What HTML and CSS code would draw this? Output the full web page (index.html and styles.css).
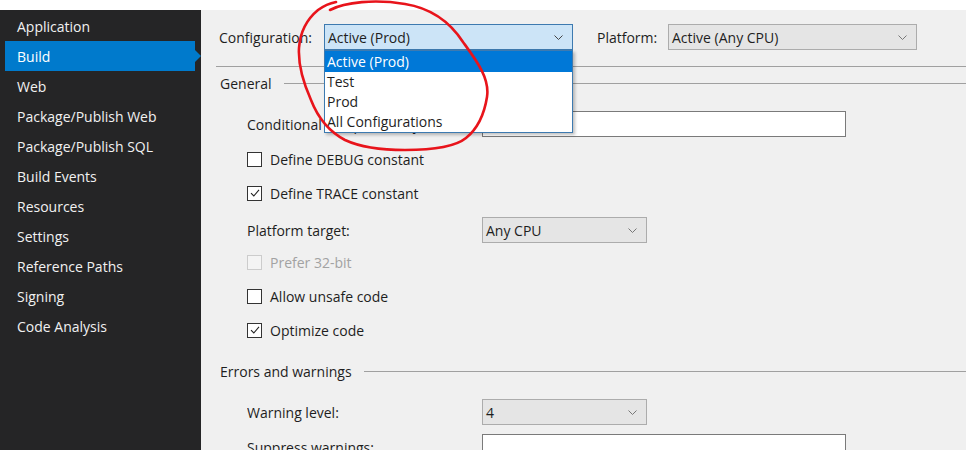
FILE: index.html
```html
<!DOCTYPE html>
<html>
<head>
<meta charset="utf-8">
<link rel="stylesheet" href="styles.css">
</head>
<body>
<div class="topstrip"></div>
<div class="window">
  <nav class="sidebar">
    <div class="nav-item">Application</div>
    <div class="nav-item active">Build</div>
    <div class="nav-item">Web</div>
    <div class="nav-item">Package/Publish Web</div>
    <div class="nav-item">Package/Publish SQL</div>
    <div class="nav-item">Build Events</div>
    <div class="nav-item">Resources</div>
    <div class="nav-item">Settings</div>
    <div class="nav-item">Reference Paths</div>
    <div class="nav-item">Signing</div>
    <div class="nav-item">Code Analysis</div>
  </nav>
  <main class="panel">
    <div class="toolbar">
      <span class="tb-label">Configuration:</span>
      <div class="combo combo-focus combo-config">
        <span>Active (Prod)</span>
        <svg class="chev" width="9" height="5" viewBox="0 0 9 5"><path d="M0.5 0.5 L4.5 4.5 L8.5 0.5" fill="none" stroke="#444" stroke-width="1"/></svg>
        <div class="droplist">
          <div class="drop-item selected">Active (Prod)</div>
          <div class="drop-item">Test</div>
          <div class="drop-item">Prod</div>
          <div class="drop-item">All Configurations</div>
        </div>
      </div>
      <span class="tb-label tb-label2">Platform:</span>
      <div class="combo combo-platform">
        <span>Active (Any CPU)</span>
        <svg class="chev" width="9" height="5" viewBox="0 0 9 5"><path d="M0.5 0.5 L4.5 4.5 L8.5 0.5" fill="none" stroke="#777" stroke-width="1"/></svg>
      </div>
    </div>
    <div class="separator"></div>

    <div class="group-head g-general"><span>General</span><div class="rule"></div></div>

    <div class="row r-cond">
      <span class="label">Conditional compilation symbols:</span>
      <div class="textbox tb-wide"></div>
    </div>
    <div class="row r-debug">
      <span class="check"></span><span class="check-text">Define DEBUG constant</span>
    </div>
    <div class="row r-trace">
      <span class="check"><svg width="12" height="12" viewBox="0 0 12 12"><path d="M2 6.2 L4.8 9 L10 2.8" fill="none" stroke="#222" stroke-width="1.1"/></svg></span><span class="check-text">Define TRACE constant</span>
    </div>
    <div class="row r-target">
      <span class="label">Platform target:</span>
      <div class="combo combo-small">
        <span>Any CPU</span>
        <svg class="chev" width="9" height="5" viewBox="0 0 9 5"><path d="M0.5 0.5 L4.5 4.5 L8.5 0.5" fill="none" stroke="#777" stroke-width="1"/></svg>
      </div>
    </div>
    <div class="row r-prefer disabled">
      <span class="check"></span><span class="check-text">Prefer 32-bit</span>
    </div>
    <div class="row r-unsafe">
      <span class="check"></span><span class="check-text">Allow unsafe code</span>
    </div>
    <div class="row r-opt">
      <span class="check"><svg width="12" height="12" viewBox="0 0 12 12"><path d="M2 6.2 L4.8 9 L10 2.8" fill="none" stroke="#222" stroke-width="1.1"/></svg></span><span class="check-text">Optimize code</span>
    </div>

    <div class="group-head g-errors"><span>Errors and warnings</span><div class="rule"></div></div>

    <div class="row r-warn">
      <span class="label">Warning level:</span>
      <div class="combo combo-small">
        <span>4</span>
        <svg class="chev" width="9" height="5" viewBox="0 0 9 5"><path d="M0.5 0.5 L4.5 4.5 L8.5 0.5" fill="none" stroke="#777" stroke-width="1"/></svg>
      </div>
    </div>
    <div class="row r-suppress">
      <span class="label">Suppress warnings:</span>
      <div class="textbox tb-wide"></div>
    </div>

    <svg class="annotation" width="220" height="170" viewBox="290 0 220 170">
      <path d="M330 10 C 345 2, 375 -1, 405 4 C 430 8, 450 22, 463 42 C 476 60, 490 78, 487 97 C 484 116, 476 130, 466 138 C 455 147, 430 150, 405 150 C 380 150, 360 147, 345 140 C 328 131, 318 118, 311 100 C 303 82, 298 65, 299 48 C 300 33, 306 20, 318 10 C 325 5, 331 3, 336 2" fill="none" stroke="#e8141b" stroke-width="2.6" stroke-linecap="round"/>
    </svg>
  </main>
</div>
</body>
</html>
```

FILE: styles.css
```css
html, body {
  margin: 0;
  padding: 0;
  background: #ffffff;
  width: 966px;
  height: 450px;
  overflow: hidden;
  font-family: "Open Sans", "Noto Sans", "Liberation Sans", sans-serif;
  font-size: 14px;
  color: #1e1e1e;
}

.topstrip {
  height: 10px;
  background: #ffffff;
}

.window {
  display: flex;
  height: 440px;
}

.sidebar {
  width: 201px;
  flex: none;
  background: #252526;
  padding-top: 1px;
  box-sizing: border-box;
}

.nav-item {
  position: relative;
  height: 30px;
  line-height: 32px;
  margin: 0 6px 0 5px;
  padding-left: 12px;
  color: #f1f1f1;
  white-space: nowrap;
}

.nav-item.active {
  background: #007acc;
  color: #ffffff;
}

.nav-item.active::after {
  content: "";
  position: absolute;
  right: -6px;
  top: 9px;
  border-top: 6px solid transparent;
  border-bottom: 6px solid transparent;
  border-left: 6px solid #007acc;
}

.panel {
  position: relative;
  flex: 1;
  background: #f0f0f0;
  padding-left: 15px;
  display: flex;
  flex-direction: column;
}

.panel > * {
  flex-shrink: 0;
}

.toolbar {
  display: flex;
  align-items: center;
  height: 26px;
  margin-top: 14px;
  padding-left: 3px;
}

.tb-label {
  width: 105px;
  flex: none;
}

.tb-label2 {
  width: 71px;
  margin-left: 24px;
}

.combo {
  position: relative;
  box-sizing: border-box;
  height: 26px;
  border: 1px solid #acacac;
  background: #e5e5e5;
  display: flex;
  align-items: center;
  padding-left: 3px;
  flex: none;
}

.combo .chev {
  position: absolute;
  right: 9px;
  top: 10px;
}

.combo-config {
  width: 249px;
}

.combo-focus {
  background: #cce4f7;
  border-color: #3d7ab0;
}

.combo-platform {
  width: 249px;
}

.combo-small {
  width: 165px;
}

.droplist {
  position: absolute;
  left: -1px;
  top: 25px;
  width: 249px;
  height: 83px;
  box-sizing: border-box;
  background: #ffffff;
  border: 1px solid #3d7ab0;
  box-shadow: 2px 2px 3px rgba(0, 0, 0, 0.25);
  z-index: 2;
}

.drop-item {
  height: 20px;
  line-height: 20px;
  padding-left: 2px;
  white-space: nowrap;
}

.drop-item.selected {
  background: #0078d7;
  color: #ffffff;
  height: 21px;
  line-height: 21px;
}

.separator {
  height: 1px;
  background: #a0a0a0;
  margin-top: 16px;
}

.group-head {
  display: flex;
  align-items: center;
  height: 20px;
  padding-left: 4px;
}

.group-head .rule {
  flex: 1;
  height: 1px;
  background: #a0a0a0;
  margin-left: 12px;
}

.g-general {
  margin-top: 6px;
}

.g-errors {
  margin-top: 18px;
}

.row {
  display: flex;
  align-items: center;
  height: 26px;
  padding-left: 31px;
}

.label {
  width: 235px;
  flex: none;
  white-space: nowrap;
  overflow: hidden;
}

.textbox {
  box-sizing: border-box;
  height: 26px;
  background: #ffffff;
  border: 1px solid #7a7a7a;
  flex: none;
}

.tb-wide {
  width: 364px;
}

.check {
  width: 15px;
  height: 15px;
  box-sizing: border-box;
  border: 1px solid #333333;
  background: #ffffff;
  display: flex;
  align-items: center;
  justify-content: center;
  margin-right: 8px;
  flex: none;
}

.disabled .check {
  border-color: #cccccc;
  background: #f4f4f4;
}

.disabled .check-text {
  color: #a2a2a2;
}

.r-cond { margin-top: 18px; }
.r-debug { margin-top: 9px; }
.r-trace { margin-top: 8px; }
.r-target { margin-top: 11px; }
.r-prefer { margin-top: 6px; }
.r-unsafe { margin-top: 8px; }
.r-opt { margin-top: 8px; }
.r-warn { margin-top: 18px; }
.r-suppress { margin-top: 9px; }

.annotation {
  position: absolute;
  left: 89px;
  top: -10px;
  z-index: 5;
  pointer-events: none;
}
```
